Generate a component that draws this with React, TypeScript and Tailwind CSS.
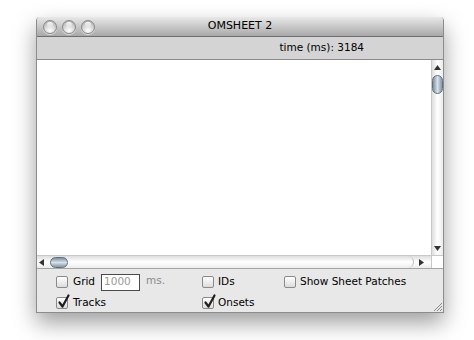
import React from "react"

const font = { fontFamily: '"DejaVu Sans", "Liberation Sans", sans-serif' }

function Light() {
  return (
    <div className="relative h-[14px] w-[14px] rounded-full border border-[#8a8a8a] bg-[radial-gradient(circle_at_50%_80%,#ffffff_0%,#dadada_45%,#a2a2a2_100%)] shadow-[0_1px_0_rgba(255,255,255,0.6)]">
      <div className="absolute left-[3px] top-[1px] h-[5px] w-[6px] rounded-full bg-gradient-to-b from-white/90 to-white/10" />
    </div>
  )
}

function Checkbox({ checked }: { checked?: boolean }) {
  return (
    <div className="relative h-[12px] w-[12px] shrink-0 rounded-[2px] border border-[#8a8a8a] bg-gradient-to-b from-white to-[#dcdcdc]">
      {checked && (
        <svg className="absolute -top-[4px] left-[0px]" width="14" height="15" viewBox="0 0 14 15">
          <path d="M2.5 8.5 L5.5 12.5 L11.5 1.5" fill="none" stroke="#1e1e1e" strokeWidth="2.2" strokeLinecap="round" strokeLinejoin="round" />
        </svg>
      )}
    </div>
  )
}

function Thumb({ vertical }: { vertical?: boolean }) {
  return (
    <div
      className={
        vertical
          ? "h-[19px] w-[11px] rounded-full border border-[#5f6f7e] bg-gradient-to-r from-[#7f90a0] via-[#d9e2ea] to-[#8596a6]"
          : "h-[11px] w-[18px] rounded-full border border-[#5f6f7e] bg-gradient-to-b from-[#7f90a0] via-[#d9e2ea] to-[#8596a6]"
      }
    />
  )
}

export default function App() {
  return (
    <div className="h-[340px] w-[474px] bg-white pl-[36px] pt-[17px]" style={font}>
      <div className="flex h-[296px] w-[408px] flex-col overflow-hidden rounded-t-[4px] border-x border-b border-[#8c8c8c] shadow-[0_10px_22px_rgba(0,0,0,0.38)]">
        {/* title bar */}
        <div className="relative flex h-[20px] shrink-0 items-center border-b border-[#6f6f6f] bg-gradient-to-b from-[#e9e9e9] to-[#a9a9a9] pl-[6px]">
          <div className="flex gap-[5px]">
            <Light />
            <Light />
            <Light />
          </div>
          <div className="absolute inset-0 flex items-center justify-center text-[11px] text-black">OMSHEET 2</div>
        </div>

        {/* toolbar */}
        <div className="flex h-[23px] shrink-0 items-center justify-end border-b border-[#8a8a8a] bg-[#d4d4d4] pr-[79px] text-[10.5px] text-black">
          time (ms): 3184
        </div>

        {/* sheet area */}
        <div className="grid flex-1 grid-cols-[1fr_12px] grid-rows-[1fr_13px]">
          <div className="bg-white" />
          <div className="flex flex-col items-center border-l border-[#c8c8c8] bg-gradient-to-r from-[#dedede] via-white to-[#ececec] pb-[4px] pt-[5px]">
            <svg width="7" height="5" viewBox="0 0 7 5">
              <path d="M3.5 0 L7 5 L0 5 Z" fill="#333" />
            </svg>
            <div className="mt-[5px]">
              <Thumb vertical />
            </div>
            <div className="flex-1" />
            <svg width="7" height="5" viewBox="0 0 7 5">
              <path d="M0 0 L7 0 L3.5 5 Z" fill="#333" />
            </svg>
          </div>
          <div className="flex items-center border-t border-[#c8c8c8] bg-gradient-to-b from-[#dedede] via-white to-[#ececec] pl-[2px] pr-[7px]">
            <svg width="5" height="7" viewBox="0 0 5 7">
              <path d="M0 3.5 L5 0 L5 7 Z" fill="#333" />
            </svg>
            <div className="ml-[6px]">
              <Thumb />
            </div>
            <div className="flex-1" />
            <div className="mr-[5px] h-[12px] w-[6px] rounded-r-full border-r border-[#c0c0c0]" />
            <svg width="5" height="7" viewBox="0 0 5 7">
              <path d="M0 0 L5 3.5 L0 7 Z" fill="#333" />
            </svg>
          </div>
          <div className="border-l border-t border-[#c8c8c8] bg-white" />
        </div>

        {/* options panel */}
        <div className="relative flex h-[44px] shrink-0 flex-col gap-[4px] border-t border-[#a5a5a5] bg-[#e8e8e8] pl-[19px] pt-[4px] text-[10.5px] text-black">
          <div className="grid h-[18px] grid-cols-[146px_82px_auto] items-center">
            <div className="flex items-center">
              <Checkbox />
              <span className="ml-[5px]">Grid</span>
              <div className="ml-[6px] flex h-[17px] w-[39px] items-end border border-[#4a4a4a] bg-white pl-[2px] text-[10.5px] text-[#9a9a9a]">
                1000
              </div>
              <span className="ml-[6px] -mt-[3px] text-[#8a8a8a]">ms.</span>
            </div>
            <div className="flex items-center">
              <Checkbox />
              <span className="ml-[4px]">IDs</span>
            </div>
            <div className="flex items-center">
              <Checkbox />
              <span className="ml-[4px]">Show Sheet Patches</span>
            </div>
          </div>
          <div className="grid h-[16px] grid-cols-[146px_82px_auto] items-center">
            <div className="flex items-center">
              <Checkbox checked />
              <span className="ml-[5px]">Tracks</span>
            </div>
            <div className="flex items-center">
              <Checkbox checked />
              <span className="ml-[4px]">Onsets</span>
            </div>
          </div>
          <svg className="absolute bottom-[1px] right-[1px]" width="9" height="9" viewBox="0 0 9 9">
            <path d="M1 9 L9 1 M4 9 L9 4 M7 9 L9 7" stroke="#8a8a8a" strokeWidth="1" />
          </svg>
        </div>
      </div>
    </div>
  )
}
